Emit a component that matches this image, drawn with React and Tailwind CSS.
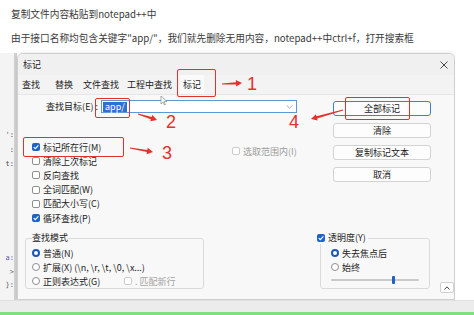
import React from 'react';

const RED = '#e5312c';

const Check = ({ checked, disabled }) =>
    checked ? (
        <span className="w-[8px] h-[8px] rounded-[2px] bg-[#1d63c9] flex items-center justify-center shrink-0">
            <svg viewBox="0 0 8 8" className="w-[8px] h-[8px]">
                <path d="M1.7 4.1 L3.3 5.7 L6.4 2.4" stroke="white" strokeWidth="1.2" fill="none" />
            </svg>
        </span>
    ) : (
        <span
            className={`w-[8px] h-[8px] rounded-[2px] border bg-white shrink-0 ${
                disabled ? 'border-[#cbcbcb]' : 'border-[#8e8e8e]'
            }`}
        />
    );

const Radio = ({ on }) =>
    on ? (
        <span className="w-[8px] h-[8px] rounded-full border-[2.5px] border-[#1a58bb] bg-white shrink-0" />
    ) : (
        <span className="w-[8px] h-[8px] rounded-full border border-[#8e8e8e] bg-white shrink-0" />
    );

const CheckRow = ({ checked, children }) => (
    <div className="flex items-center gap-[3px] h-[14.2px]">
        <Check checked={checked} />
        <span>{children}</span>
    </div>
);

const Btn = ({ primary, children }) => (
    <div
        className={`w-[98px] h-[15px] rounded-[3px] bg-[#fdfdfd] border flex items-center justify-center text-[9px] leading-none ${
            primary ? 'border-[#3f7fd3]' : 'border-[#d3d3d3]'
        }`}
    >
        {children}
    </div>
);

// tapered hand-drawn looking arrow
const arrowPts = (x1, y1, x2, y2) => {
    const dx = x2 - x1,
        dy = y2 - y1,
        L = Math.hypot(dx, dy);
    const ux = dx / L,
        uy = dy / L,
        nx = -uy,
        ny = ux;
    const hl = 6,
        hw = 3.3,
        tw = 0.4,
        sw = 1.1;
    const bx = x2 - ux * hl,
        by = y2 - uy * hl;
    const p = [
        [x1 + nx * tw, y1 + ny * tw],
        [bx + nx * sw, by + ny * sw],
        [bx + nx * hw, by + ny * hw],
        [x2, y2],
        [bx - nx * hw, by - ny * hw],
        [bx - nx * sw, by - ny * sw],
        [x1 - nx * tw, y1 - ny * tw],
    ];
    return p.map((q) => q.map((v) => v.toFixed(1)).join(',')).join(' ');
};

const Annotations = () => (
    <>
        <svg className="absolute inset-0 pointer-events-none" width="474" height="315">
            <polygon points={arrowPts(222, 84, 242, 83)} fill={RED} />
            <polygon points={arrowPts(138, 114, 157, 120)} fill={RED} />
            <polygon points={arrowPts(130, 148, 153, 152)} fill={RED} />
            <polygon points={arrowPts(343, 110, 311, 119)} fill={RED} />
            {/* mouse cursor */}
            <path d="M161 96 L161 104 L163 102 L164.5 105 L165.5 104.5 L164 101.5 L167 101.5 Z" fill="#fff" stroke="#777" strokeWidth="0.6" />
        </svg>
        <div className="absolute left-[177px] top-[69px] w-[39px] h-[28px] border-[1.5px] border-[#e5312c] rounded-[2px]" />
        <div className="absolute left-[95px] top-[98px] w-[35px] h-[20px] border-[1.5px] border-[#e5312c] rounded-[2px]" />
        <div className="absolute left-[345px] top-[97px] w-[65px] h-[23px] border-[1.5px] border-[#e5312c] rounded-[2px]" />
        <div className="absolute left-[23px] top-[137px] w-[101px] h-[20px] border-[1.5px] border-[#e5312c] rounded-[2px]" />
        <span className="absolute left-[247px] top-[75px] text-[18px] leading-none text-[#e5312c] font-['Liberation_Sans',sans-serif]">1</span>
        <span className="absolute left-[166px] top-[113px] text-[18px] leading-none text-[#e5312c] font-['Liberation_Sans',sans-serif]">2</span>
        <span className="absolute left-[162px] top-[144px] text-[18px] leading-none text-[#e5312c] font-['Liberation_Sans',sans-serif]">3</span>
        <span className="absolute left-[289px] top-[113px] text-[18px] leading-none text-[#e5312c] font-['Liberation_Sans',sans-serif]">4</span>
    </>
);

const Dialog = () => (
    <div className="w-[438px] h-[247px] shrink-0 border border-[#cfcfcf] rounded-t-[6px] bg-[#f8f8f8] flex flex-col text-[#1c1c1c] overflow-hidden shadow-[0_0_4px_rgba(0,0,0,0.12)]">
        {/* title bar */}
        <div className="h-[21px] bg-[#f0f0f0] flex items-center justify-between pl-[5px] pr-[6px]">
            <span className="text-[9px] leading-none">标记</span>
            <svg viewBox="0 0 8 8" className="w-[8px] h-[8px]">
                <path d="M0.5 0.5 L7.5 7.5 M7.5 0.5 L0.5 7.5" stroke="#333" strokeWidth="0.9" />
            </svg>
        </div>
        {/* tabs */}
        <div className="h-[20px] bg-[#f3f3f3] flex items-center pl-[4px] text-[9px] leading-none border-b border-[#e6e6e6]">
            <span>查找</span>
            <span className="ml-[15px]">替换</span>
            <span className="ml-[10px]">文件查找</span>
            <span className="ml-[8px]">工程中查找</span>
            <span className="ml-[8px] h-full flex items-center bg-[#fafafa] px-[3px] -mx-[3px]">标记</span>
        </div>
        {/* top section */}
        <div className="h-[137px] flex">
            <div className="w-[315px] flex flex-col">
                <div className="flex items-center h-[13px] mt-[5px]">
                    <span className="text-[9px] leading-none w-[80px] text-right whitespace-nowrap">查找目标(E) :</span>
                    <div className="ml-[3px] w-[196px] h-[13px] bg-white border border-[#5d97d8] flex items-center pl-[1px] pr-[3px]">
                        <span className="bg-[#2e6fd5] text-white text-[9px] leading-[10px] px-[2px]">app/</span>
                        <svg viewBox="0 0 8 5" className="ml-auto w-[7px] h-[4px]">
                            <path d="M0.5 0.5 L4 4 L7.5 0.5" stroke="#888" strokeWidth="0.9" fill="none" />
                        </svg>
                    </div>
                </div>
                <div className="flex mt-[27px] text-[9px] leading-none">
                    <div className="w-[214px] pl-[14px] flex flex-col">
                        <CheckRow checked>标记所在行(M)</CheckRow>
                        <CheckRow>清除上次标记</CheckRow>
                        <CheckRow>反向查找</CheckRow>
                        <CheckRow>全词匹配(W)</CheckRow>
                        <CheckRow>匹配大小写(C)</CheckRow>
                        <CheckRow checked>循环查找(P)</CheckRow>
                    </div>
                    <div className="pt-[4px]">
                        <div className="flex items-center gap-[3px] h-[14.2px] text-[#9c9c9c]">
                            <Check disabled />
                            <span>选取范围内(I)</span>
                        </div>
                    </div>
                </div>
            </div>
            <div className="flex flex-col gap-[7px] pt-[6px]">
                <Btn primary>全部标记</Btn>
                <Btn>清除</Btn>
                <Btn>复制标记文本</Btn>
                <Btn>取消</Btn>
            </div>
        </div>
        {/* bottom section */}
        <div className="flex items-start text-[9px] leading-none">
            <fieldset className="ml-[7px] w-[179px] border border-[#dadada] rounded-[3px]">
                <legend className="ml-[6px] leading-[12px]">查找模式</legend>
                <div className="pl-[6px] pt-[2px] flex flex-col">
                    <div className="flex items-center gap-[3px] h-[14px]">
                        <Radio on />
                        <span>普通(N)</span>
                    </div>
                    <div className="flex items-center gap-[3px] h-[14px]">
                        <Radio />
                        <span>{'扩展(X) (\\n, \\r, \\t, \\0, \\x...)'}</span>
                    </div>
                    <div className="flex items-center gap-[3px] h-[14px]">
                        <Radio />
                        <span className="w-[78px]">正则表达式(G)</span>
                        <Check disabled />
                        <span className="text-[#a3a3a3]">. 匹配新行</span>
                    </div>
                </div>
            </fieldset>
            <fieldset className="ml-[116px] w-[110px] border border-[#dadada] rounded-[3px]">
                <legend className="ml-[-4px] leading-[12px] pr-[2px]">
                    <span className="flex items-center gap-[3px]">
                        <Check checked />
                        <span>透明度(Y)</span>
                    </span>
                </legend>
                <div className="pl-[10px] pt-[2px] pb-[7px] flex flex-col">
                    <div className="flex items-center gap-[3px] h-[14px]">
                        <Radio on />
                        <span>失去焦点后</span>
                    </div>
                    <div className="flex items-center gap-[3px] h-[14px]">
                        <Radio />
                        <span>始终</span>
                    </div>
                    <div className="relative w-[88px] h-[2px] bg-[#cacaca] rounded-full mt-[5px]">
                        <div className="absolute left-[61px] top-[-3px] w-[3px] h-[8px] bg-[#1f62c4] rounded-[1px]" />
                    </div>
                </div>
            </fieldset>
            <div className="ml-[10px] mt-[50px] w-[14px] h-[11px] bg-white border border-[#cfcfcf] rounded-[2px] flex items-center justify-center">
                <svg viewBox="0 0 6 4" className="w-[6px] h-[4px]">
                    <path d="M0.5 3.5 L3 0.8 L5.5 3.5" stroke="#333" strokeWidth="0.9" fill="none" />
                </svg>
            </div>
        </div>
    </div>
);

const EditorStrip = () => (
    <div className="w-[17px] shrink-0 bg-[#f4f4f4] flex">
        <div className="w-[14px] flex flex-col items-end text-[7px] leading-[8px] font-['DejaVu_Sans_Mono',monospace] pt-[78px] text-[#444]">
            <span>':</span>
            <span className="mt-[7px]">:</span>
            <span className="mt-[6px]">t:</span>
            <span className="mt-[86px] text-[#5a4bb0]">a:</span>
            <span className="mt-[6px] text-[#666]">&gt;</span>
            <span className="mt-[5px] text-[#555]">}:</span>
        </div>
        <div className="w-[3px] bg-[#d2d2d2]" />
    </div>
);

export default function App() {
    return (
        <div className="relative w-[474px] h-[315px] overflow-hidden bg-white flex flex-col font-['Noto_Sans_CJK_SC','Noto_Sans',sans-serif]">
            <div className="h-[53px] shrink-0 pl-[11px] pt-[8px] text-[9.7px] leading-[12px] text-[#3a3a3a]">
                <p>复制文件内容粘贴到notepad++中</p>
                <p className="mt-[12px]">由于接口名称均包含关键字"app/"，我们就先删除无用内容，notepad++中ctrl+f，打开搜索框</p>
            </div>
            <div className="flex h-[247px] shrink-0">
                <EditorStrip />
                <Dialog />
                <div className="flex-1 bg-white" />
            </div>
            <div className="h-[12px] shrink-0 bg-[#ececec] border-t border-[#e0e0e0]" />
            <div className="h-[3px] shrink-0 bg-[#7ee07e]" />
            <Annotations />
        </div>
    );
}
